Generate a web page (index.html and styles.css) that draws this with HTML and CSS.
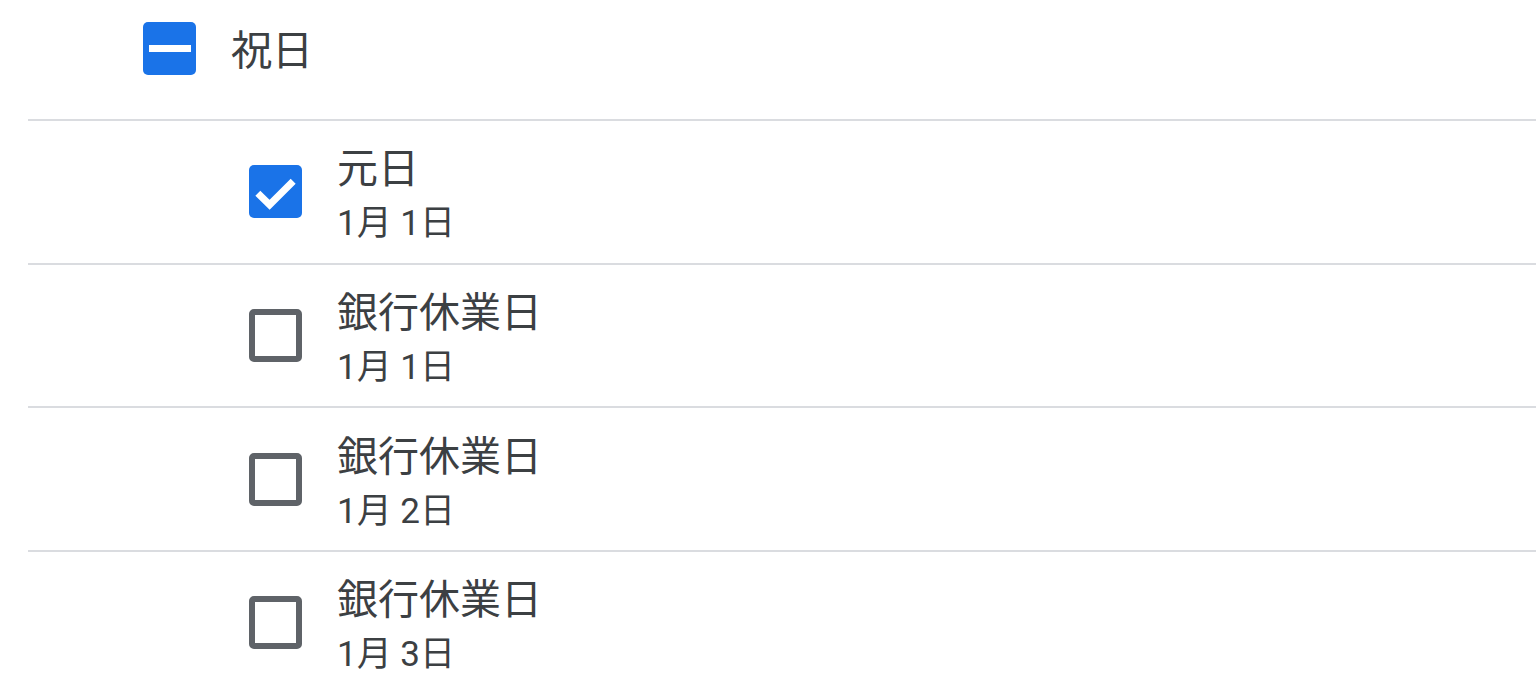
FILE: index.html
```html
<!DOCTYPE html>
<html lang="ja">
<head>
<meta charset="utf-8">
<title>祝日</title>
<link rel="stylesheet" href="styles.css">
</head>
<body>
<div class="group">
  <div class="group-head">
    <span class="cb cb-on cb-indeterminate"><span class="dash"></span></span>
    <span class="head-label">祝日</span>
  </div>
  <ul class="items">
    <li class="item">
      <span class="cb cb-on">
        <svg class="check" viewBox="0 0 18 18"><polyline points="3,9.6 7,13.5 15,5.5" fill="none" stroke="#fff" stroke-width="2.4"/></svg>
      </span>
      <div class="item-text">
        <div class="item-title">元日</div>
        <div class="item-sub">1月 1日</div>
      </div>
    </li>
    <li class="item">
      <span class="cb cb-off"></span>
      <div class="item-text">
        <div class="item-title">銀行休業日</div>
        <div class="item-sub">1月 1日</div>
      </div>
    </li>
    <li class="item">
      <span class="cb cb-off"></span>
      <div class="item-text">
        <div class="item-title">銀行休業日</div>
        <div class="item-sub">1月 2日</div>
      </div>
    </li>
    <li class="item">
      <span class="cb cb-off"></span>
      <div class="item-text">
        <div class="item-title">銀行休業日</div>
        <div class="item-sub">1月 3日</div>
      </div>
    </li>
  </ul>
</div>
</body>
</html>
```
FILE: styles.css
```css
html, body {
  margin: 0;
  padding: 0;
  background: #ffffff;
}
body {
  font-family: Roboto, "Noto Sans CJK JP", sans-serif;
  color: #3c4043;
  overflow: hidden;
}
.group-head {
  display: flex;
  align-items: center;
  height: 96px;
  padding-left: 143px;
}
.cb {
  box-sizing: border-box;
  width: 53px;
  height: 53px;
  border-radius: 5px;
  flex: none;
  display: flex;
  align-items: center;
  justify-content: center;
}
.cb-on {
  background: #1a73e8;
}
.cb-off {
  border: 6px solid #5f6368;
}
.dash {
  width: 42px;
  height: 7px;
  background: #ffffff;
}
.check {
  width: 53px;
  height: 53px;
  display: block;
}
.head-label {
  margin-left: 35px;
  padding-top: 6px;
  font-size: 41px;
  line-height: 56px;
}
.items {
  list-style: none;
  margin: 23px 0 0 28px;
  padding: 0;
}
.item {
  display: flex;
  align-items: center;
  box-sizing: border-box;
  height: 143.67px;
  border-top: 2.5px solid #dadce0;
  padding-left: 221px;
}
.item-text {
  margin-left: 35px;
  padding-top: 8px;
}
.item-title {
  font-size: 41px;
  line-height: 54px;
}
.item-sub {
  margin-top: 3px;
  font-size: 35px;
  line-height: 50px;
  color: #3c4043;
}
```
